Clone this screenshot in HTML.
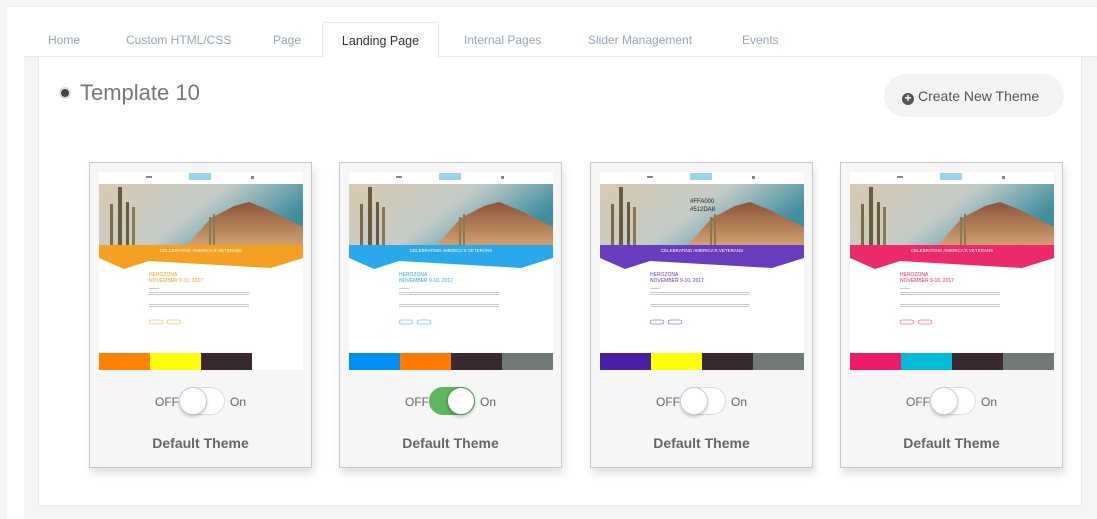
<!DOCTYPE html>
<html><head><meta charset="utf-8"><style>
*{box-sizing:border-box;margin:0;padding:0}
body{width:1097px;height:519px;background:#f5f5f5;font-family:"Liberation Sans",sans-serif;position:relative;overflow:hidden}
.panel{position:absolute;left:7px;top:6px;width:1090px;height:513px;background:#fff;border-top:1px solid #eceeee}
.tabline{position:absolute;left:24px;top:56px;width:1073px;height:1px;background:#e3e8e8}
.tab{position:absolute;top:33px;font-size:12px;color:#9aa5b5}
.active{position:absolute;left:322px;top:22px;width:117px;height:36px;background:#fff;border:1px solid #e3e8e8;border-bottom:none;border-radius:3px 3px 0 0;font-size:12.5px;color:#333;text-align:center;padding-top:11px}
.gray{position:absolute;left:24px;top:57px;width:1073px;height:462px;background:#f5f5f5}
.box{position:absolute;left:38px;top:57px;width:1044px;height:449px;background:#fff;border:1px solid #e6eaea;border-top:none}
.title{position:absolute;left:80px;top:80px;font-size:22px;color:#777;font-weight:300}
.dot{position:absolute;left:59px;top:87px;width:12px;height:12px;border-radius:50%;background:#444;border:2px solid #ddd}
.btn{position:absolute;left:884px;top:74px;width:180px;height:43px;border-radius:22px;background:#f3f3f3;font-size:14px;color:#555;padding:14px 0 0 18px}
.btn i{display:inline-block;width:12px;height:12px;border-radius:50%;background:#555;color:#fff;font-style:normal;font-size:12px;line-height:11px;text-align:center;font-weight:bold;margin-right:4px;vertical-align:-1px}
.card{position:absolute;top:162px;width:223px;height:306px;background:#f6f6f6;border:1px solid #c9c9c9;box-shadow:2px 6px 8px rgba(0,0,0,.12)}
.thumb{position:absolute;left:9px;top:9px;width:204px;height:181px}
.sw{position:absolute;left:9px;top:190px;width:204px;height:17px;display:flex}
.sw div{flex:1}
.tg{position:absolute;left:0;width:100%;top:224px;text-align:center;font-size:12px;color:#666}
.off{position:absolute;left:65px;top:8px}
.on{position:absolute;left:140px;top:8px}
.sl{position:absolute;left:89px;top:0;width:46px;height:28px;border-radius:14px;background:#fff;border:1px solid #ddd}
.kn{position:absolute;top:-1px;left:-1px;width:28px;height:28px;border-radius:50%;background:#fff;border:1px solid #ccc;box-shadow:0 2px 3px rgba(0,0,0,.2)}
.sl.g{background:#5cb85c;border-color:#5cb85c}
.sl.g .kn{left:17px;border-color:#4a9a4a}
.name{position:absolute;left:0;width:100%;top:272px;text-align:center;font-size:14px;font-weight:bold;color:#666}
</style></head><body>
<div class="panel"></div>
<div class="tabline"></div>
<div class="tab" style="left:48px">Home</div>
<div class="tab" style="left:126px">Custom HTML/CSS</div>
<div class="tab" style="left:273px">Page</div>
<div class="active">Landing Page</div>
<div class="tab" style="left:464px">Internal Pages</div>
<div class="tab" style="left:588px">Slider Management</div>
<div class="tab" style="left:742px">Events</div>
<div class="gray"></div>
<div class="box"></div>
<div class="dot"></div>
<div class="title">Template 10</div>
<div class="btn"><i>+</i>Create New Theme</div>

<svg width="0" height="0" style="position:absolute"><defs>
<linearGradient id="sky" x1="0" y1="0" x2="1" y2="0.4"><stop offset="0" stop-color="#d8cab0"/><stop offset=".55" stop-color="#c4ccc8"/><stop offset="1" stop-color="#3f8ea0"/></linearGradient>
<linearGradient id="rock" x1="0" y1="0" x2="0" y2="1"><stop offset="0" stop-color="#8a5438"/><stop offset="1" stop-color="#d0a070"/></linearGradient>
<g id="img">
<rect width="204" height="181" fill="#fff"/>
<rect x="0" y="12" width="204" height="61" fill="url(#sky)"/>
<polygon points="88,73 112,46 135,34 150,30 170,38 204,55 204,73" fill="url(#rock)"/>
<rect x="19" y="15" width="4" height="58" fill="#6a5a40"/>
<rect x="11" y="32" width="3" height="41" fill="#7a6a48"/>
<rect x="27" y="30" width="3" height="43" fill="#6a5a40"/>
<rect x="33" y="35" width="3" height="38" fill="#8a7a50"/>
<rect x="110" y="45" width="2" height="28" fill="#8a7a50"/>
<rect x="114" y="42" width="2" height="31" fill="#8a7a50"/>
<rect x="90" y="1" width="22" height="7" fill="#7fc8e8" opacity=".8"/>
<rect x="47" y="4" width="6" height="2" fill="#888"/>
<rect x="152" y="4" width="3" height="3" fill="#888"/>
</g></defs></svg>

<div class="card" style="left:89px">
<svg class="thumb" viewBox="0 0 204 181"><use href="#img"/><polygon points="0,73 204,73 204,86 172,96 50,89 25,97 0,86" fill="#f5a020"/><text x="102" y="80" font-size="4.5" fill="#fff" text-anchor="middle" font-family="Liberation Sans">CELEBRATING AMERICA'S VETERANS</text><text x="50" y="104" font-size="5" fill="#f5a020" font-family="Liberation Sans">HEROZONA</text><text x="50" y="110" font-size="5" fill="#f5a020" font-family="Liberation Sans">NOVEMBER 9-10, 2017</text><g fill="#ccc"><rect x="50" y="116" width="10" height="1"/><rect x="50" y="120" width="100" height="1"/><rect x="50" y="122" width="100" height="1"/><rect x="50" y="132" width="100" height="1"/><rect x="50" y="134" width="100" height="1"/></g><rect x="50" y="148" width="14" height="4" rx="2" fill="none" stroke="#f5a020" stroke-width=".5"/><rect x="68" y="148" width="14" height="4" rx="2" fill="none" stroke="#f5a020" stroke-width=".5"/></svg>
<div class="sw"><div style="background:#ff8300"></div><div style="background:#ffff00"></div><div style="background:#3a2a2f"></div><div style="background:#fff"></div></div>
<div class="tg"><span class="off">OFF</span><div class="sl"><div class="kn"></div></div><span class="on">On</span></div>
<div class="name">Default Theme</div></div>

<div class="card" style="left:339px">
<svg class="thumb" viewBox="0 0 204 181"><use href="#img"/><polygon points="0,73 204,73 204,86 172,96 50,89 25,97 0,86" fill="#2aa8ec"/><text x="102" y="80" font-size="4.5" fill="#fff" text-anchor="middle" font-family="Liberation Sans">CELEBRATING AMERICA'S VETERANS</text><text x="50" y="104" font-size="5" fill="#2aa8ec" font-family="Liberation Sans">HEROZONA</text><text x="50" y="110" font-size="5" fill="#2aa8ec" font-family="Liberation Sans">NOVEMBER 9-10, 2017</text><g fill="#ccc"><rect x="50" y="116" width="10" height="1"/><rect x="50" y="120" width="100" height="1"/><rect x="50" y="122" width="100" height="1"/><rect x="50" y="132" width="100" height="1"/><rect x="50" y="134" width="100" height="1"/></g><rect x="50" y="148" width="14" height="4" rx="2" fill="none" stroke="#2aa8ec" stroke-width=".5"/><rect x="68" y="148" width="14" height="4" rx="2" fill="none" stroke="#2aa8ec" stroke-width=".5"/></svg>
<div class="sw"><div style="background:#0090f5"></div><div style="background:#ff7a00"></div><div style="background:#3a2a2f"></div><div style="background:#717977"></div></div>
<div class="tg"><span class="off">OFF</span><div class="sl g"><div class="kn"></div></div><span class="on">On</span></div>
<div class="name">Default Theme</div></div>

<div class="card" style="left:590px">
<svg class="thumb" viewBox="0 0 204 181"><use href="#img"/><polygon points="0,73 204,73 204,86 172,96 50,89 25,97 0,86" fill="#6a3cc0"/><text x="90" y="31" font-size="6" fill="#222" font-family="Liberation Sans">#FFA000</text><text x="90" y="39" font-size="6" fill="#222" font-family="Liberation Sans">#512DA8</text><text x="102" y="80" font-size="4.5" fill="#fff" text-anchor="middle" font-family="Liberation Sans">CELEBRATING AMERICA'S VETERANS</text><text x="50" y="104" font-size="5" fill="#6a3cc0" font-family="Liberation Sans">HEROZONA</text><text x="50" y="110" font-size="5" fill="#6a3cc0" font-family="Liberation Sans">NOVEMBER 9-10, 2017</text><g fill="#ccc"><rect x="50" y="116" width="10" height="1"/><rect x="50" y="120" width="100" height="1"/><rect x="50" y="122" width="100" height="1"/><rect x="50" y="132" width="100" height="1"/><rect x="50" y="134" width="100" height="1"/></g><rect x="50" y="148" width="14" height="4" rx="2" fill="none" stroke="#6a3cc0" stroke-width=".5"/><rect x="68" y="148" width="14" height="4" rx="2" fill="none" stroke="#6a3cc0" stroke-width=".5"/></svg>
<div class="sw"><div style="background:#4a1fa5"></div><div style="background:#ffff00"></div><div style="background:#3a2a2f"></div><div style="background:#717977"></div></div>
<div class="tg"><span class="off">OFF</span><div class="sl"><div class="kn"></div></div><span class="on">On</span></div>
<div class="name">Default Theme</div></div>

<div class="card" style="left:840px">
<svg class="thumb" viewBox="0 0 204 181"><use href="#img"/><polygon points="0,73 204,73 204,86 172,96 50,89 25,97 0,86" fill="#ec2a6a"/><text x="102" y="80" font-size="4.5" fill="#fff" text-anchor="middle" font-family="Liberation Sans">CELEBRATING AMERICA'S VETERANS</text><text x="50" y="104" font-size="5" fill="#ec2a6a" font-family="Liberation Sans">HEROZONA</text><text x="50" y="110" font-size="5" fill="#ec2a6a" font-family="Liberation Sans">NOVEMBER 9-10, 2017</text><g fill="#ccc"><rect x="50" y="116" width="10" height="1"/><rect x="50" y="120" width="100" height="1"/><rect x="50" y="122" width="100" height="1"/><rect x="50" y="132" width="100" height="1"/><rect x="50" y="134" width="100" height="1"/></g><rect x="50" y="148" width="14" height="4" rx="2" fill="none" stroke="#ec2a6a" stroke-width=".5"/><rect x="68" y="148" width="14" height="4" rx="2" fill="none" stroke="#ec2a6a" stroke-width=".5"/></svg>
<div class="sw"><div style="background:#ee1a6a"></div><div style="background:#00bcd4"></div><div style="background:#3a2a2f"></div><div style="background:#717977"></div></div>
<div class="tg"><span class="off">OFF</span><div class="sl"><div class="kn"></div></div><span class="on">On</span></div>
<div class="name">Default Theme</div></div>
</body></html>
